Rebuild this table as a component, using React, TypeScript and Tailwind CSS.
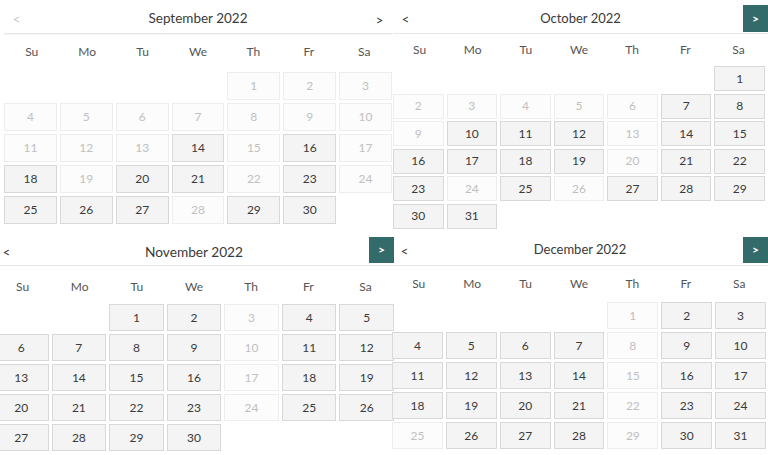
import React from "react";

type Cell = { d: number; on: boolean } | null;

function build(lead: number, days: number, on: number[]): Cell[] {
  const cells: Cell[] = [];
  for (let i = 0; i < lead; i++) cells.push(null);
  for (let d = 1; d <= days; d++) cells.push({ d, on: on.includes(d) });
  return cells;
}

const range = (a: number, b: number) => Array.from({ length: b - a + 1 }, (_, i) => a + i);

const sep = build(4, 30, [14, 16, 18, 20, 21, 23, 25, 26, 27, 29, 30]);
const oct = build(6, 31, [1, 7, 8, 10, 11, 12, 14, 15, 16, 17, 18, 19, 21, 22, 23, 25, 27, 28, 29, 30, 31]);
const nov = build(2, 30, range(1, 30).filter((d) => ![3, 10, 17, 24].includes(d)));
const dec = build(4, 31, range(2, 31).filter((d) => ![8, 15, 22, 25, 29].includes(d)));

const names = ["Su", "Mo", "Tu", "We", "Th", "Fr", "Sa"];

function DayCell({ c }: { c: Cell }) {
  if (!c) return <div />;
  return c.on ? (
    <div className="flex items-center justify-center border border-[#d8d8d8] bg-[#f4f4f4] text-[12px] text-[#3a3a3a]">
      {c.d}
    </div>
  ) : (
    <div className="flex items-center justify-center border border-[#ededed] bg-[#fcfcfc] text-[12px] text-[#c0c0c0]">
      {c.d}
    </div>
  );
}

function Prev({ cls }: { cls: string }) {
  return <div className={"flex w-[25px] shrink-0 items-center justify-center text-[13px] " + cls}>&lt;</div>;
}

function NextPlain() {
  return <div className="flex w-[25px] shrink-0 items-center justify-center pt-[5px] text-[13px] text-[#333]">&gt;</div>;
}

function NextTeal({ h }: { h: string }) {
  return (
    <div className={"flex w-[25px] shrink-0 items-center justify-center bg-[#336b6a] text-[12px] font-bold text-white " + h}>
      &gt;
    </div>
  );
}

export default function App() {
  return (
    <div className="relative h-[455px] w-[768px] overflow-hidden bg-white font-['Lato',sans-serif]">
      {/* Top row */}
      <div className="flex h-[235px] items-start">
        {/* September */}
        <div className="ml-[4px] w-[388px] shrink-0">
          <div className="flex h-[34px] items-center border-b border-[#e6e6e6] pt-[3px] shadow-[0_1px_1px_rgba(0,0,0,0.04)]">
            <Prev cls="pt-[3px] text-[#c4c4c4]" />
            <div className="flex-1 text-center text-[13.5px] text-[#3a3a3a]">September 2022</div>
            <NextPlain />
          </div>
          <div className="grid h-[36px] grid-cols-7 items-center text-center text-[12px] text-[#555]">
            {names.map((n) => (
              <div key={n}>{n}</div>
            ))}
          </div>
          <div className="mt-[2px] grid auto-rows-[28px] grid-cols-7 gap-[3px]">
            {sep.map((c, i) => (
              <DayCell key={i} c={c} />
            ))}
          </div>
        </div>
        {/* October */}
        <div className="ml-[1px] w-[375px] shrink-0">
          <div className="flex h-[34px] items-center border-b border-[#e6e6e6] pt-[4px]">
            <Prev cls="pt-[3px] text-[#333]" />
            <div className="flex-1 text-center text-[13px] text-[#3a3a3a]">October 2022</div>
            <NextTeal h="h-[27px]" />
          </div>
          <div className="grid h-[32px] w-[372px] grid-cols-7 items-center text-center text-[12px] text-[#555]">
            {names.map((n) => (
              <div key={n}>{n}</div>
            ))}
          </div>
          <div className="grid w-[372px] auto-rows-[25px] grid-cols-7 gap-x-[3px] gap-y-[2.5px]">
            {oct.map((c, i) => (
              <DayCell key={i} c={c} />
            ))}
          </div>
        </div>
      </div>
      {/* Bottom row */}
      <div className="flex items-start">
        {/* November */}
        <div className="-ml-[6px] w-[400px] shrink-0">
          <div className="flex h-[31px] items-center border-b border-[#e6e6e6]">
            <Prev cls="pt-[6px] text-[#333]" />
            <div className="flex-1 pt-[5px] text-center text-[13.7px] text-[#3a3a3a]">November 2022</div>
            <NextTeal h="h-[26px]" />
          </div>
          <div className="grid h-[38px] grid-cols-7 items-center pt-[4px] text-center text-[12px] text-[#555]">
            {names.map((n) => (
              <div key={n}>{n}</div>
            ))}
          </div>
          <div className="grid auto-rows-[27px] grid-cols-7 gap-[3px]">
            {nov.map((c, i) => (
              <DayCell key={i} c={c} />
            ))}
          </div>
        </div>
        {/* December */}
        <div className="-ml-[2px] w-[376px] shrink-0">
          <div className="flex h-[31px] items-center border-b border-[#e6e6e6]">
            <Prev cls="pt-[4px] text-[#333]" />
            <div className="flex-1 text-center text-[13px] text-[#3a3a3a]">December 2022</div>
            <NextTeal h="h-[26px]" />
          </div>
          <div className="grid h-[36px] w-[374px] grid-cols-7 items-center text-center text-[12px] text-[#555]">
            {names.map((n) => (
              <div key={n}>{n}</div>
            ))}
          </div>
          <div className="grid w-[374px] auto-rows-[27px] grid-cols-7 gap-[3px]">
            {dec.map((c, i) => (
              <DayCell key={i} c={c} />
            ))}
          </div>
        </div>
      </div>
    </div>
  );
}
